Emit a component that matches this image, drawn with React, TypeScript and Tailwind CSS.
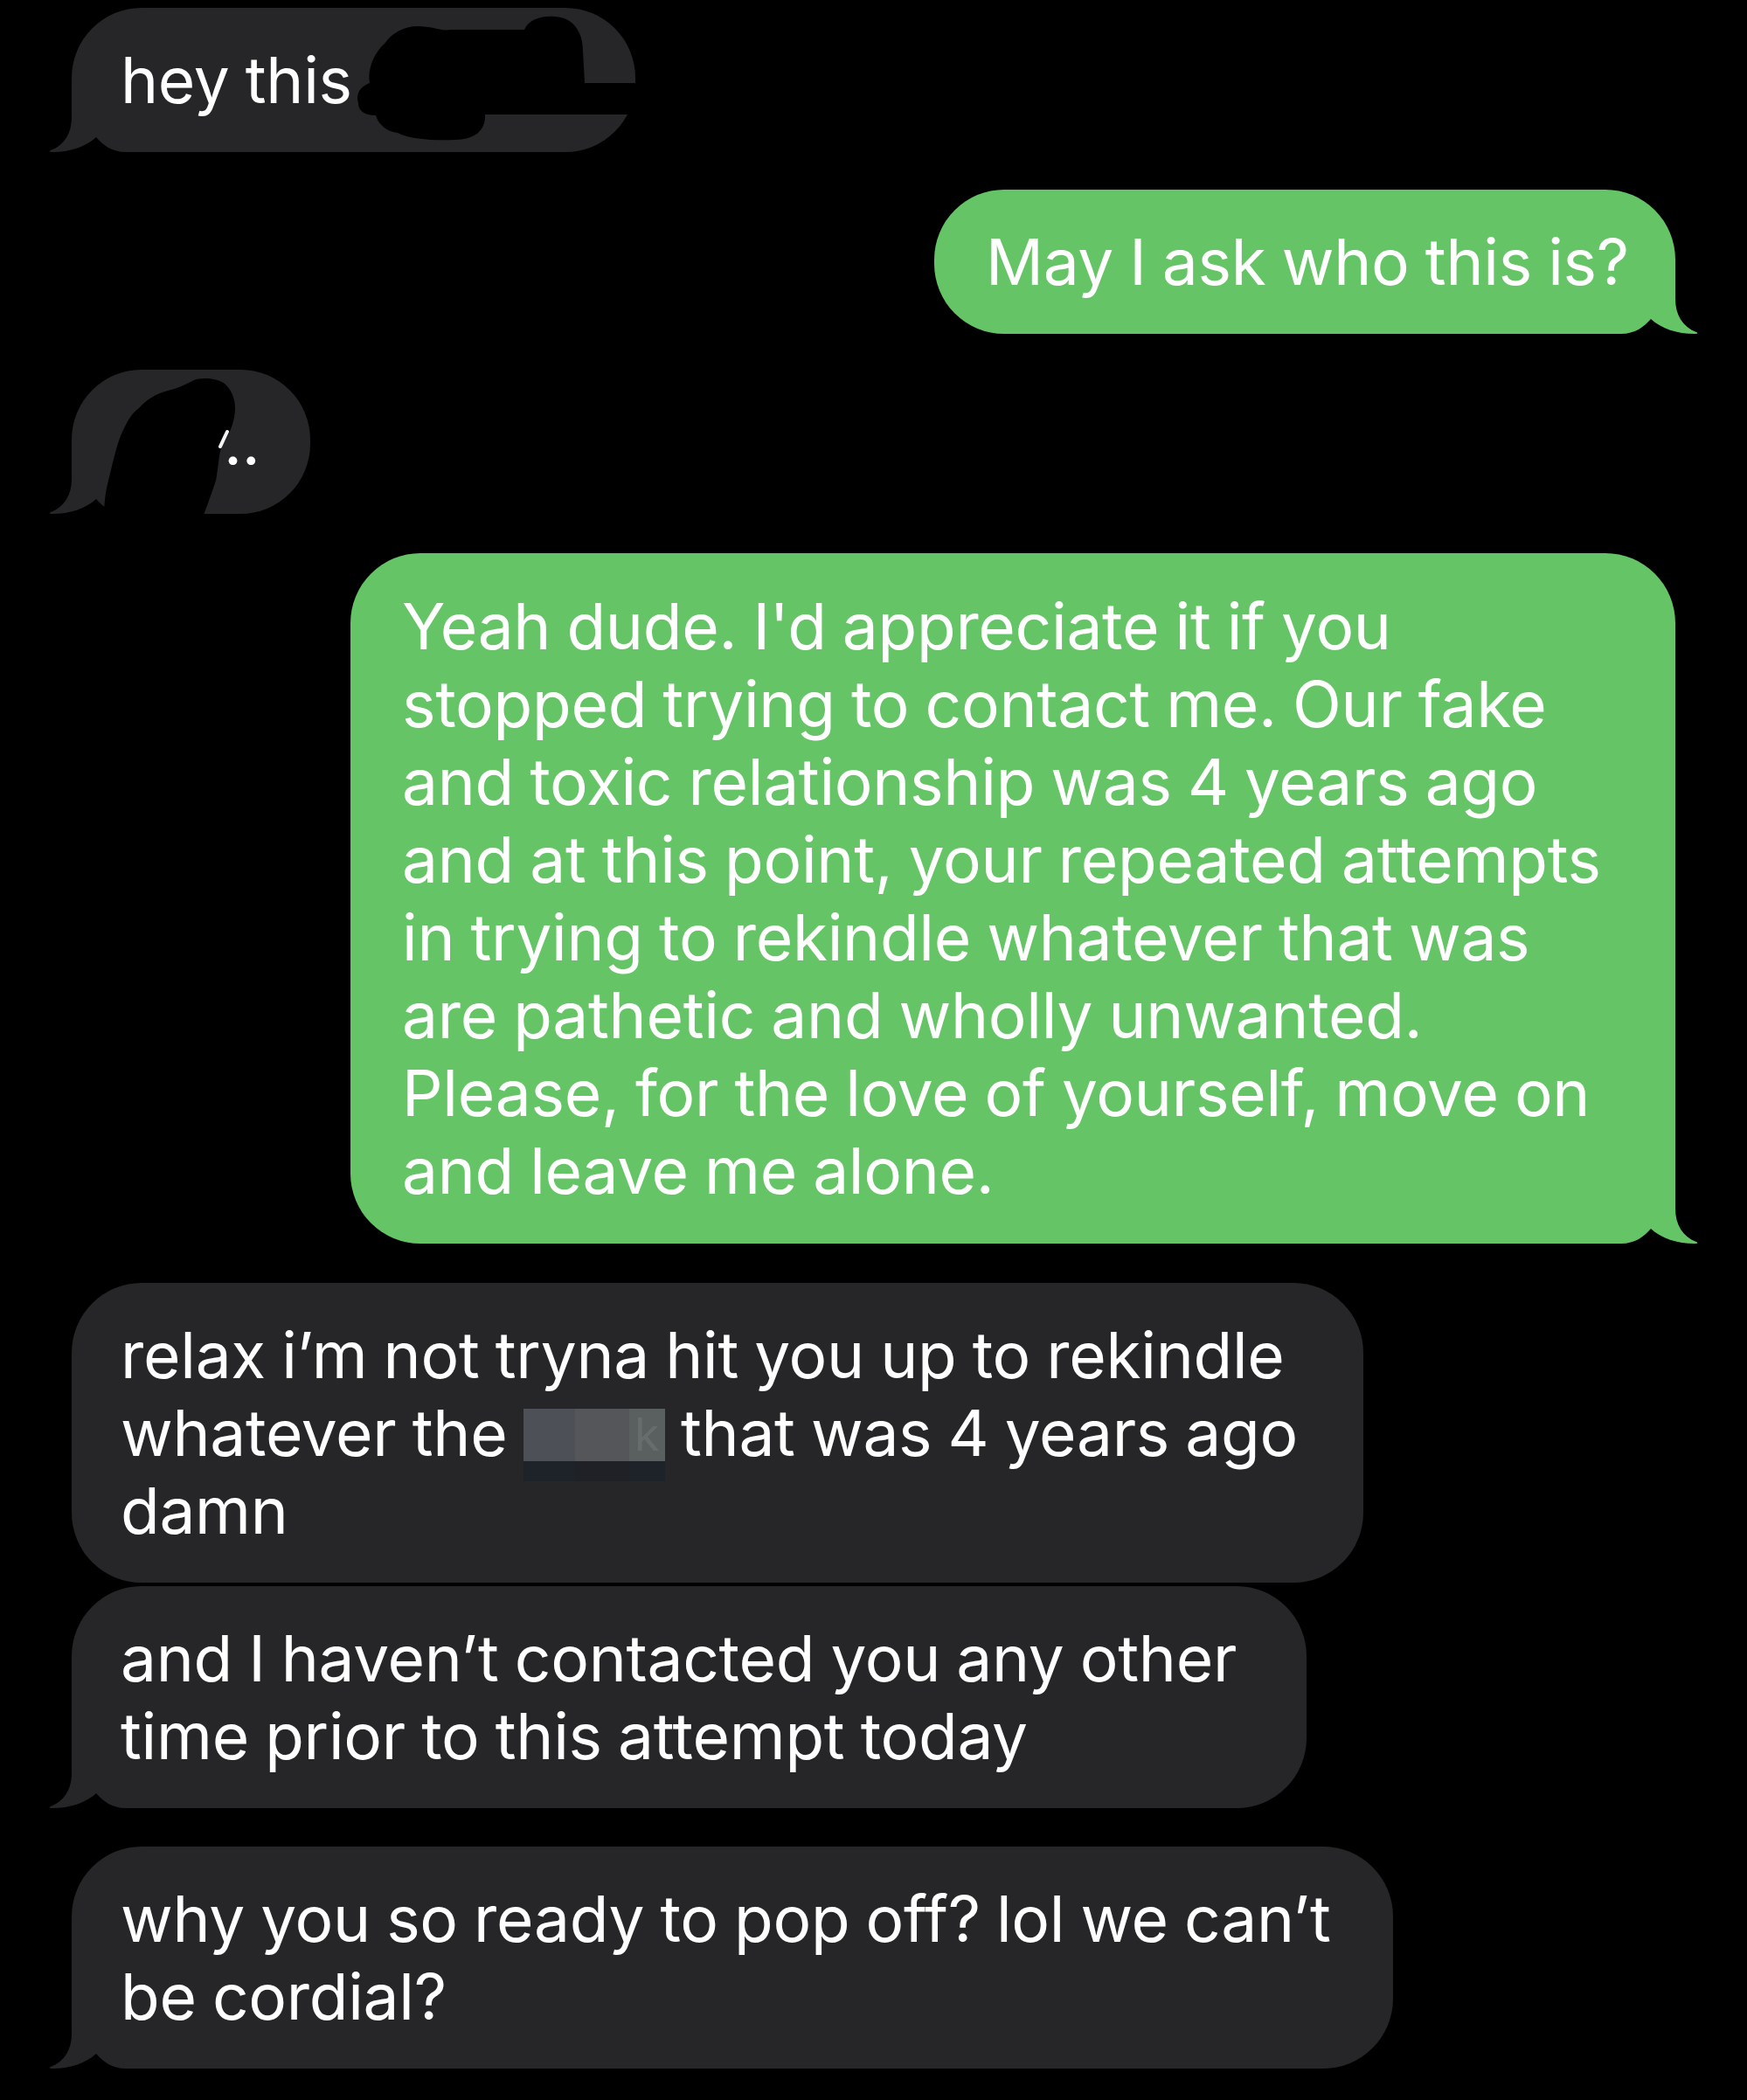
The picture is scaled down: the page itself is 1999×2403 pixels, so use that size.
import clsx from "clsx";
import type { ReactNode } from "react";

// iMessage style tail, drawn for the left side; mirrored for sent bubbles
const TAIL =
  "M30,0 V40 C30,58 22,72 6,78 C4,79 4,80 8,80 C28,80 46,74 58,63 C66,72 76,80 92,80 H120 V0 Z";

function Tail({ sent }: { sent: boolean }) {
  return (
    <svg
      viewBox="0 0 120 80"
      aria-hidden
      className={clsx(
        "absolute bottom-0 h-[80px] w-[120px]",
        sent ? "right-[-30px]" : "left-[-30px]"
      )}
    >
      <path
        d={TAIL}
        fill={sent ? "#65c466" : "#262628"}
        transform={sent ? "translate(120 0) scale(-1 1)" : undefined}
      />
    </svg>
  );
}

interface BubbleProps {
  sent?: boolean;
  tail?: boolean;
  className?: string;
  children: ReactNode;
  overlay?: ReactNode;
}

function Bubble({ sent = false, tail = true, className, children, overlay }: BubbleProps) {
  return (
    <div
      className={clsx(
        "relative shrink-0 rounded-[80px] text-[73px] leading-[89px] tracking-[-0.004em] [word-spacing:-2px] text-white whitespace-nowrap",
        sent ? "self-end bg-[#65c466] pl-[59px]" : "self-start bg-[#262628] pl-[56px]",
        className
      )}
    >
      {tail && <Tail sent={sent} />}
      <div className="relative">{children}</div>
      {overlay}
    </div>
  );
}

function Censor() {
  return (
    <span className="inline-flex align-top mt-[17px] -mb-[11px] h-[83px]">
      <span className="flex w-[59px] flex-col">
        <span className="h-[60px] bg-[#4d5157]" />
        <span className="h-[23px] bg-[#1e2229]" />
      </span>
      <span className="flex w-[62px] flex-col">
        <span className="h-[60px] bg-[#55565a]" />
        <span className="h-[23px] bg-[#202126]" />
      </span>
      <span className="flex w-[41px] flex-col">
        <span className="flex h-[60px] items-center justify-center bg-[#5a5f60] text-[52px] leading-none text-[#676c6d]">
          k
        </span>
        <span className="h-[23px] bg-[#1e2229]" />
      </span>
    </span>
  );
}

export default function App() {
  return (
    <div className="min-h-[2403px] w-full bg-black font-['Inter','Noto_Sans',sans-serif] antialiased">
      <div className="flex flex-col px-[82px] pt-[9px] pb-[36px]">
        {/* hey this ... (name scribbled out) */}
        <Bubble
          className="w-[645px] py-[38px]"
          overlay={
            <svg
              viewBox="82 9 645 165"
              aria-hidden
              className="pointer-events-none absolute inset-0 h-full w-full overflow-visible"
            >
              <path
                fill="#000"
                d="M410,118 C406,105 415,98 423,95 C420,80 428,60 440,50 C448,38 462,30 478,30 C495,30 505,36 515,34 L600,34 C605,22 620,18 635,19 C657,20 667,38 667,58 L669,95 L727,95 L727,131 L555,131 C556,148 545,160 520,160 C500,161 470,160 455,152 C440,150 432,140 430,132 C416,132 410,126 410,118 Z"
              />
            </svg>
          }
        >
          hey this
        </Bubble>

        <Bubble sent className="mt-[43px] w-[848px] py-[38px]">
          May I ask who this is?
        </Bubble>

        {/* second incoming message, mostly blacked out */}
        <Bubble
          className="mt-[41px] w-[273px] py-[38px]"
          overlay={
            <svg
              viewBox="80 423 273 165"
              aria-hidden
              className="pointer-events-none absolute inset-0 h-full w-full overflow-visible"
            >
              <path
                fill="#000"
                d="M117,592 C117,580 118,565 122,550 C127,530 132,505 140,490 C146,478 150,472 157,467 C165,458 175,451 190,447 C200,445 210,440 220,435 C228,432 245,432 255,439 C262,445 267,455 267,467 C267,480 262,495 252,510 C248,520 248,535 245,550 C240,565 235,578 230,592 Z"
              />
              <line x1="258" y1="494" x2="250" y2="511" stroke="#f4f4f4" strokeWidth="4" strokeLinecap="round" />
            </svg>
          }
        >
          <span className="inline-block w-[118px]" />..
        </Bubble>

        <Bubble sent className="mt-[45px] w-[1516px] py-[39px]">
          Yeah dude. I'd appreciate it if you
          <br />
          stopped trying to contact me. Our fake
          <br />
          and toxic relationship was 4 years ago
          <br />
          and at this point, your repeated attempts
          <br />
          in trying to rekindle whatever that was
          <br />
          are pathetic and wholly unwanted.
          <br />
          Please, for the love of yourself, move on
          <br />
          and leave me alone.
        </Bubble>

        <Bubble tail={false} className="mt-[45px] w-[1478px] py-[38px]">
          relax i’m not tryna hit you up to rekindle
          <br />
          whatever the <Censor /> that was 4 years ago
          <br />
          damn
        </Bubble>

        <Bubble className="mt-[4px] w-[1413px] py-[38px]">
          and I haven’t contacted you any other
          <br />
          time prior to this attempt today
        </Bubble>

        <Bubble className="mt-[44px] w-[1512px] py-[38px]">
          why you so ready to pop off? lol we can’t
          <br />
          be cordial?
        </Bubble>
      </div>
    </div>
  );
}
